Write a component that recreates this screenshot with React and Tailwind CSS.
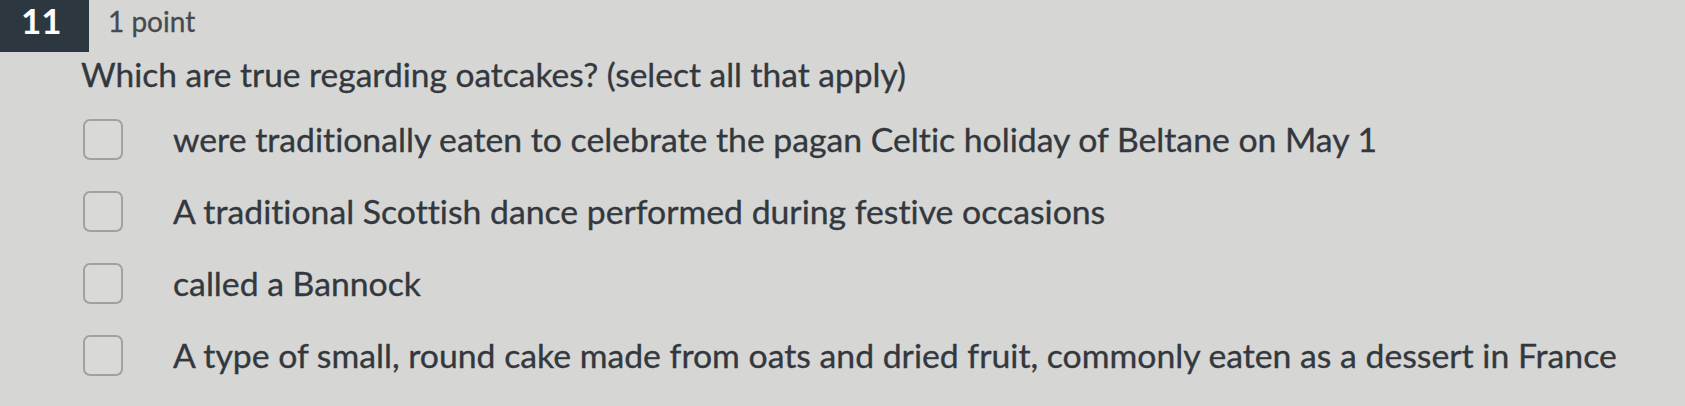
import React from 'react';

const options = [
    'were traditionally eaten to celebrate the pagan Celtic holiday of Beltane on May 1',
    'A traditional Scottish dance performed during festive occasions',
    'called a Bannock',
    'A type of small, round cake made from oats and dried fruit, commonly eaten as a dessert in France',
];

function Option({ label }) {
    return (
        <label className="flex items-center h-[72px]">
            <span className="w-[40px] h-[41px] shrink-0 rounded-[7px] border-2 border-[#a1a1a0] bg-[#d9d9d7]"></span>
            <span className="ml-[50px] mt-[1px] text-[33.75px] leading-none text-[#33383e] [-webkit-text-stroke:0.35px_#33383e]">{label}</span>
        </label>
    );
}

export default function App() {
    return (
        <div className="w-[1685px] h-[406px] overflow-hidden bg-[#d6d6d4] font-['Lato','Liberation_Sans',sans-serif] [font-variant-ligatures:none]">
            <div className="flex items-start">
                <div className="w-[89px] h-[52px] bg-[#2c3740] pl-[21px] pt-[3px]">
                    <span className="block text-[35px] font-bold text-white leading-none">11</span>
                </div>
                <span className="ml-[19px] mt-[7px] text-[28px] text-[#454a50] leading-none [-webkit-text-stroke:0.3px_#454a50]">1 point</span>
            </div>
            <div className="pl-[81px] pt-[6px] text-[33.5px] text-[#33383e] leading-none [-webkit-text-stroke:0.35px_#33383e]">
                Which are true regarding oatcakes? (select all that apply)
            </div>
            <div className="pl-[83px] pt-[12px] flex flex-col">
                {options.map((o) => (
                    <Option key={o} label={o} />
                ))}
            </div>
        </div>
    );
}
